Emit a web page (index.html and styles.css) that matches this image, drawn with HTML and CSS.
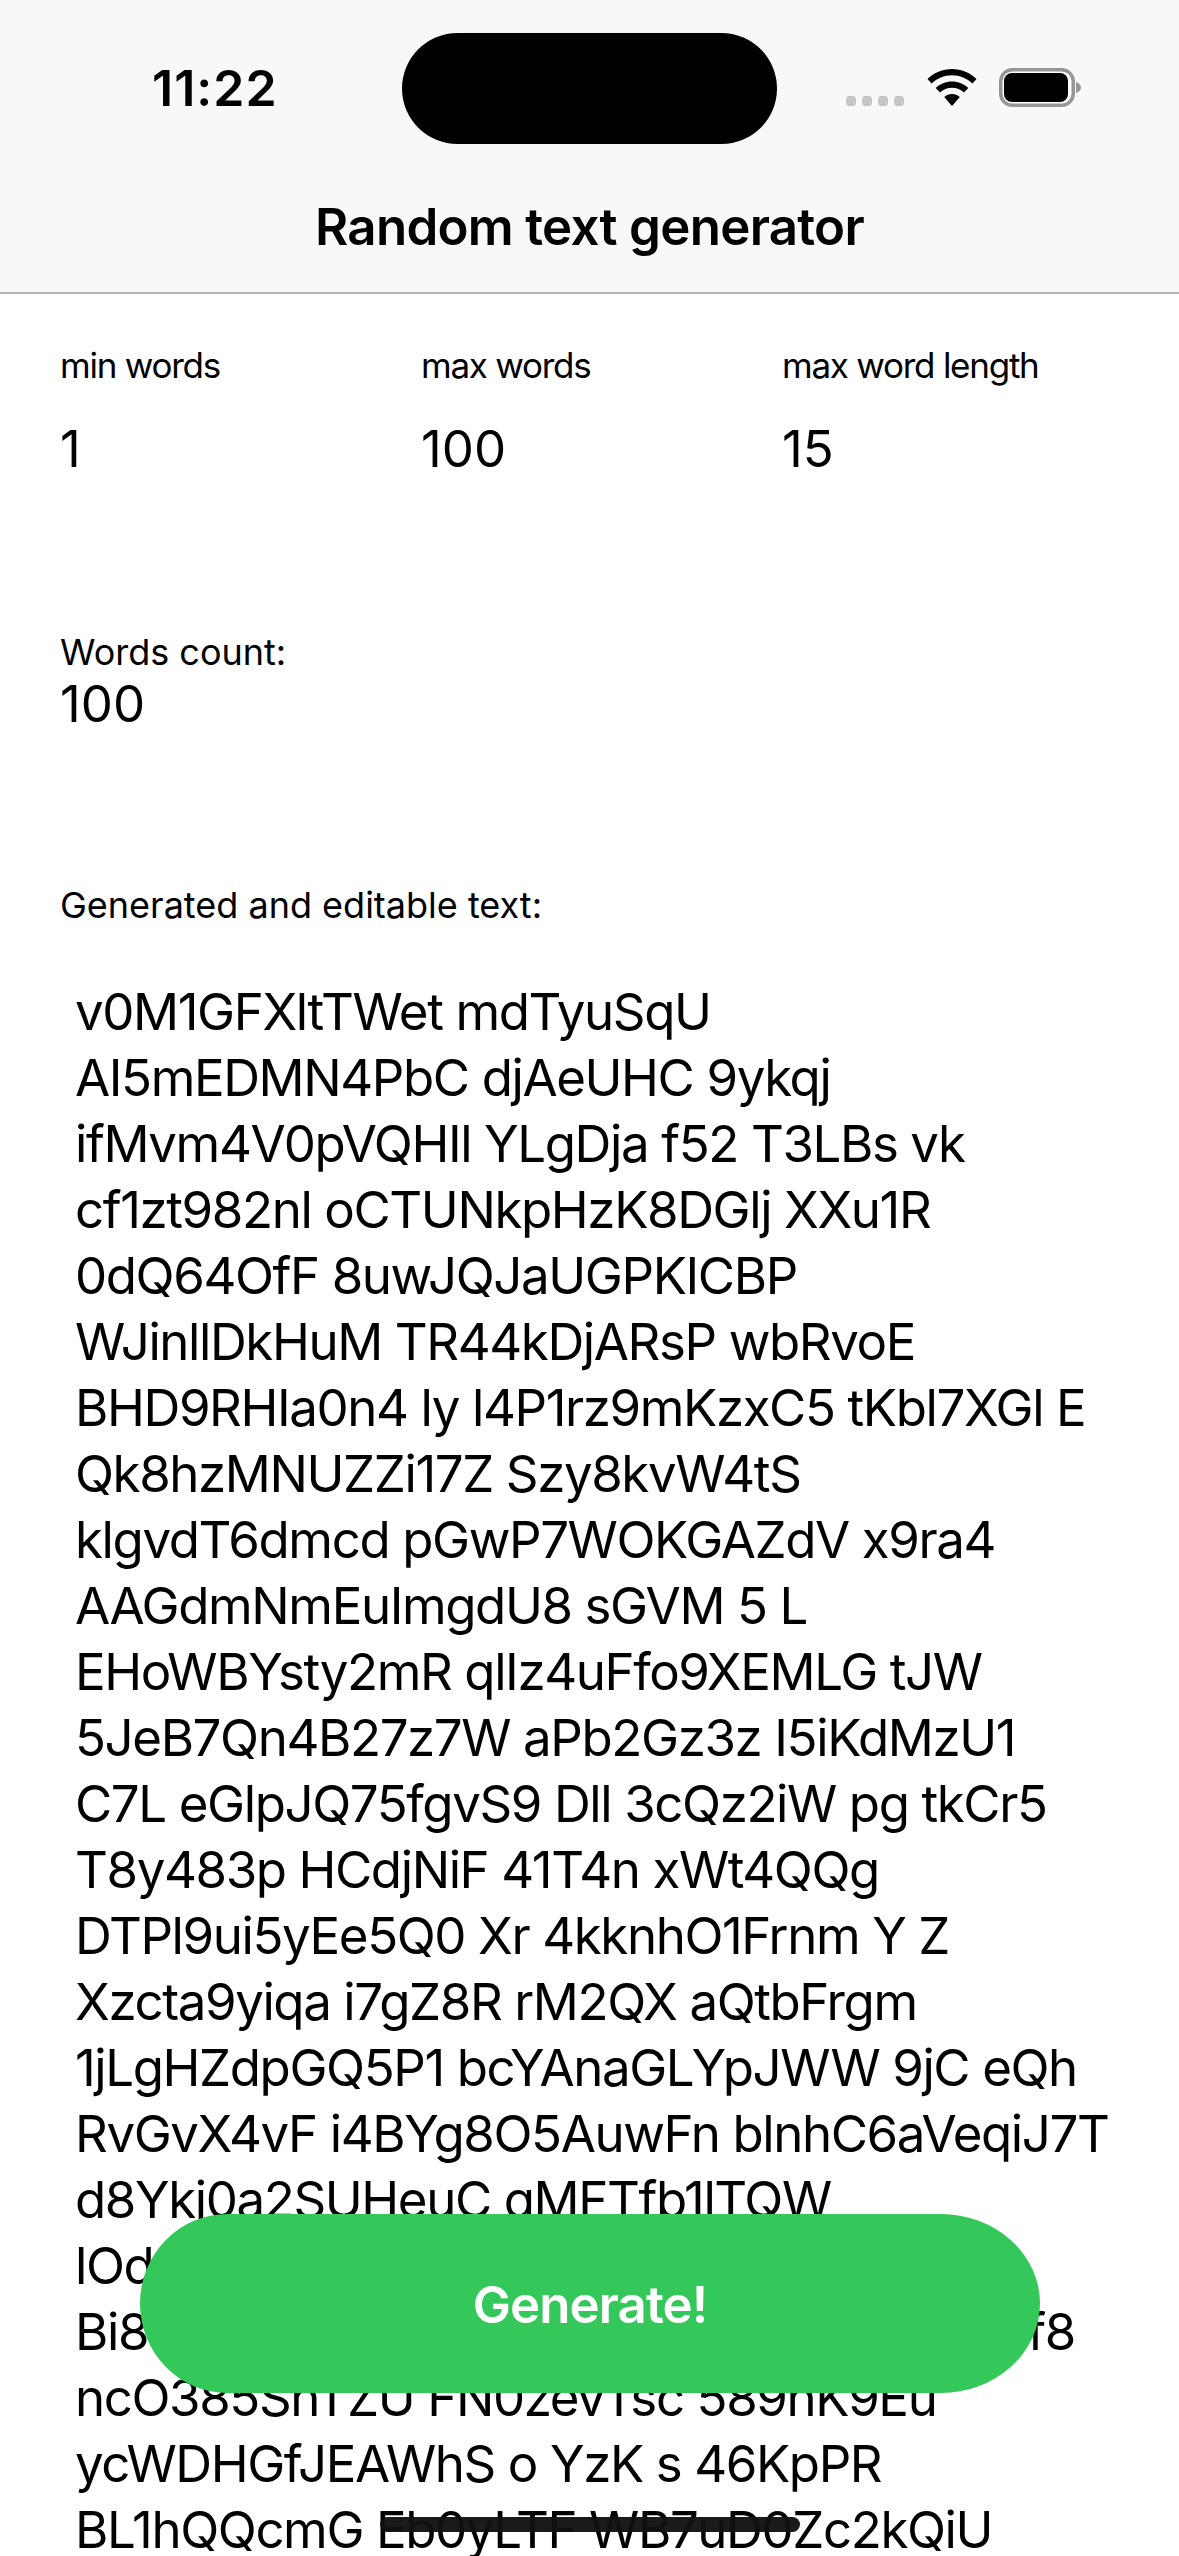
FILE: index.html
```html
<!DOCTYPE html>
<html lang="en">
<head>
<meta charset="utf-8">
<title>Random text generator</title>
<link rel="stylesheet" href="styles.css">
</head>
<body>
<div class="screen">
  <header class="nav">
    <div class="status">
      <span class="time">11:22</span>
      <div class="island"></div>
      <div class="status-icons">
        <svg class="signal" width="58" height="10" viewBox="0 0 58 10"><rect x="0" y="0" width="10" height="10" rx="3.500"/><rect x="16" y="0" width="10" height="10" rx="3.500"/><rect x="32" y="0" width="10" height="10" rx="3.500"/><rect x="48" y="0" width="10" height="10" rx="3.500"/></svg>
        <svg class="wifi" width="50" height="37" viewBox="0 0 50 37"><path d="M25 0C15.500 0 7 3.700 0.500 10L4.500 14.500C10 9.300 17.200 6.200 25 6.200S40 9.300 45.500 14.500L49.500 10C43 3.700 34.500 0 25 0Z"/><path d="M25 12.500C18.700 12.500 13 14.900 8.700 19L13 23.600C16.200 20.600 20.400 18.800 25 18.800S33.800 20.600 37 23.600L41.300 19C37 14.900 31.300 12.500 25 12.500Z"/><path d="M25 25C22 25 19.300 26.100 17.200 28L25 37L32.800 28C30.700 26.100 28 25 25 25Z"/></svg>
        <svg class="battery" width="82" height="39" viewBox="0 0 82 39"><rect x="1.750" y="1.750" width="72.500" height="35.500" rx="11.500" fill="#fff" stroke="#969696" stroke-width="3.500"/><rect x="5" y="5" width="64" height="29" rx="8" fill="#000"/><path d="M77 14C80 15 82 17 82 19.500S80 24 77 25Z" fill="#969696"/></svg>
      </div>
    </div>
    <h1 class="title">Random text generator</h1>
  </header>
  <main class="content">
    <section class="params">
      <div class="param"><label class="label small">min words</label><div class="value">1</div></div>
      <div class="param"><label class="label small">max words</label><div class="value">100</div></div>
      <div class="param"><label class="label small">max word length</label><div class="value">15</div></div>
    </section>
    <section class="count">
      <div class="label">Words count:</div>
      <div class="value">100</div>
    </section>
    <section class="generated">
      <div class="label">Generated and editable text:</div>
      <div class="text">
        <div>v0M1GFXltTWet mdTyuSqU</div>
        <div>AI5mEDMN4PbC djAeUHC 9ykqj</div>
        <div>ifMvm4V0pVQHIl YLgDja f52 T3LBs vk</div>
        <div>cf1zt982nl oCTUNkpHzK8DGlj XXu1R</div>
        <div>0dQ64OfF 8uwJQJaUGPKICBP</div>
        <div>WJinllDkHuM TR44kDjARsP wbRvoE</div>
        <div>BHD9RHIa0n4 ly l4P1rz9mKzxC5 tKbl7XGl E</div>
        <div>Qk8hzMNUZZi17Z Szy8kvW4tS</div>
        <div>klgvdT6dmcd pGwP7WOKGAZdV x9ra4</div>
        <div>AAGdmNmEuImgdU8 sGVM 5 L</div>
        <div>EHoWBYsty2mR qlIz4uFfo9XEMLG tJW</div>
        <div>5JeB7Qn4B27z7W aPb2Gz3z I5iKdMzU1</div>
        <div>C7L eGlpJQ75fgvS9 Dll 3cQz2iW pg tkCr5</div>
        <div>T8y483p HCdjNiF 41T4n xWt4QQg</div>
        <div>DTPl9ui5yEe5Q0 Xr 4kknhO1Frnm Y Z</div>
        <div>Xzcta9yiqa i7gZ8R rM2QX aQtbFrgm</div>
        <div>1jLgHZdpGQ5P1 bcYAnaGLYpJWW 9jC eQh</div>
        <div>RvGvX4vF i4BYg8O5AuwFn blnhC6aVeqiJ7T</div>
        <div>d8Ykj0a2SUHeuC gMFTfb1lTQW</div>
        <div>lOd</div>
        <div class="split"><span>Bi8</span><span>f8</span></div>
        <div>ncO385ShTZU FN0zevTsc 589nK9Eu</div>
        <div>ycWDHGfJEAWhS o YzK s 46KpPR</div>
        <div>BL1hQQcmG Eb0yLTF WB7uD0Zc2kQiU</div>
      </div>
    </section>
  </main>
  <button class="generate">Generate!</button>
  <div class="home"></div>
</div>
</body>
</html>
```
FILE: styles.css
```css
* { box-sizing: border-box; }
html, body { margin: 0; padding: 0; background: #fff; }
.screen {
  position: relative;
  width: 1179px;
  height: 2556px;
  overflow: hidden;
  font-family: Inter, "Liberation Sans", sans-serif;
  color: #000;
}
.nav {
  height: 294px;
  background: #f8f8f8;
  border-bottom: 2px solid #b4b4b4;
}
.status {
  display: flex;
  align-items: flex-start;
  padding-top: 33px;
  height: 196px;
}
.time {
  width: 402px;
  padding-left: 152px;
  padding-top: 25px;
  font-size: 50px;
  line-height: 60px;
  font-weight: 600;
  letter-spacing: 1px;
}
.island {
  width: 375px;
  height: 111px;
  border-radius: 56px;
  background: #000;
}
.status-icons {
  display: flex;
  align-items: flex-start;
  padding-left: 69px;
  padding-top: 36px;
}
.signal { fill: #c6c6c6; margin-top: 27px; }
.wifi { margin-left: 23px; }
.battery { margin-left: 22px; margin-top: -1px; }
.title {
  margin: 0;
  text-align: center;
  font-size: 51px;
  line-height: 62px;
  font-weight: 600;
  letter-spacing: -0.7px;
}
.content { padding: 46px 0 0 60px; }
.params {
  display: grid;
  grid-template-columns: repeat(3, 361px);
}
.label {
  display: block;
  font-size: 36px;
  line-height: 50px;
}
.label.small {
  font-size: 35px;
  letter-spacing: -1.25px;
}
.value {
  font-size: 51px;
  line-height: 60px;
  margin-top: 29px;
}
.count { margin-top: 148px; }
.count .value { margin-top: -3px; }
.generated { margin-top: 146px; }
.text {
  margin-top: 49px;
  padding-left: 15px;
  font-size: 51px;
  line-height: 66px;
  white-space: nowrap;
  letter-spacing: -1.4px;
}
.split {
  display: flex;
  justify-content: space-between;
  width: 1000px;
}
.generate {
  position: absolute;
  left: 140px;
  top: 2214px;
  width: 900px;
  height: 179px;
  padding-top: 2px;
  border: 0;
  border-radius: 88px 100px 100px 88px / 90px;
  background: #34c759;
  color: #fff;
  font-family: inherit;
  font-size: 51px;
  font-weight: 600;
  letter-spacing: -0.9px;
}
.home {
  position: absolute;
  left: 380px;
  top: 2517px;
  width: 420px;
  height: 15px;
  border-radius: 8px;
  background: rgba(17, 17, 17, 0.96);
}
```
